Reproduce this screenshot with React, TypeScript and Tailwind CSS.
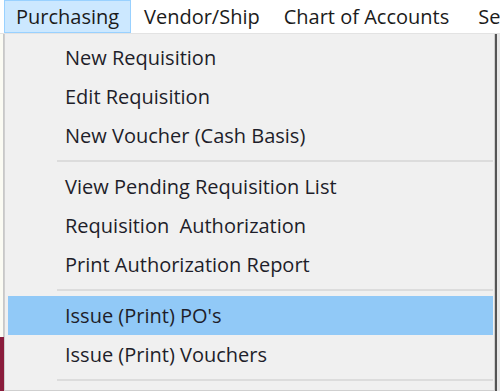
// Purchasing menu dropdown, Windows classic style
const font = { fontFamily: '"Open Sans", "Noto Sans", "Liberation Sans", sans-serif' };

type Entry = { label: string; active?: boolean } | 'sep';

const entries: Entry[] = [
  { label: 'New Requisition' },
  { label: 'Edit Requisition' },
  { label: 'New Voucher (Cash Basis)' },
  'sep',
  { label: 'View Pending Requisition List' },
  { label: 'Requisition\u00a0 Authorization' },
  { label: 'Print Authorization Report' },
  'sep',
  { label: "Issue (Print) PO's", active: true },
  { label: 'Issue (Print) Vouchers' },
  'sep',
];

function MenuBar() {
  return (
    <div className="flex h-[34px] items-stretch border-b border-[#e3e3e3] bg-white text-[20px] text-[#1b1b1b]">
      <div className="ml-[4px] flex w-[127px] shrink-0 items-center border border-[#99d1ff] bg-[#cce8ff] pl-[11px]">
        Purchasing
      </div>
      <div className="flex shrink-0 items-center pl-[13px]">Vendor/Ship</div>
      <div className="flex shrink-0 items-center pl-[24px]">Chart of Accounts</div>
      <div className="flex shrink-0 items-center pl-[29px]">Setup</div>
    </div>
  );
}

function Dropdown() {
  return (
    <div className="flex flex-1 flex-col border border-t-0 border-[#cfcfcf] bg-[#f0f0f0] pt-[4px] text-[20px] text-[#1e1e2a]">
      {entries.map((e, i) =>
        e === 'sep' ? (
          <div key={i} className="flex h-[12px] items-center pl-[52px] pr-[1px]">
            <div className="h-[2px] w-full bg-[#dcdcdc]" />
          </div>
        ) : (
          <div
            key={i}
            className={
              'mr-[1px] ml-[3px] flex h-[39px] items-center pl-[57px] ' +
              (e.active ? 'bg-[#91c9f7]' : '')
            }
          >
            {e.label}
          </div>
        ),
      )}
    </div>
  );
}

export default function App() {
  return (
    <div className="h-[391px] w-[500px] overflow-hidden bg-white" style={font}>
      <MenuBar />
      <div className="flex h-[357px]">
        <div className="flex w-[4px] flex-col">
          <div className="h-[303px] border-r border-[#c8c8c8] bg-[#fbfbf3]" />
          <div className="flex-1 bg-[#8a1c3c]" />
        </div>
        <Dropdown />
        <div className="w-[5px] border-l-2 border-[#555] bg-[#e8e8e8]" />
      </div>
    </div>
  );
}
